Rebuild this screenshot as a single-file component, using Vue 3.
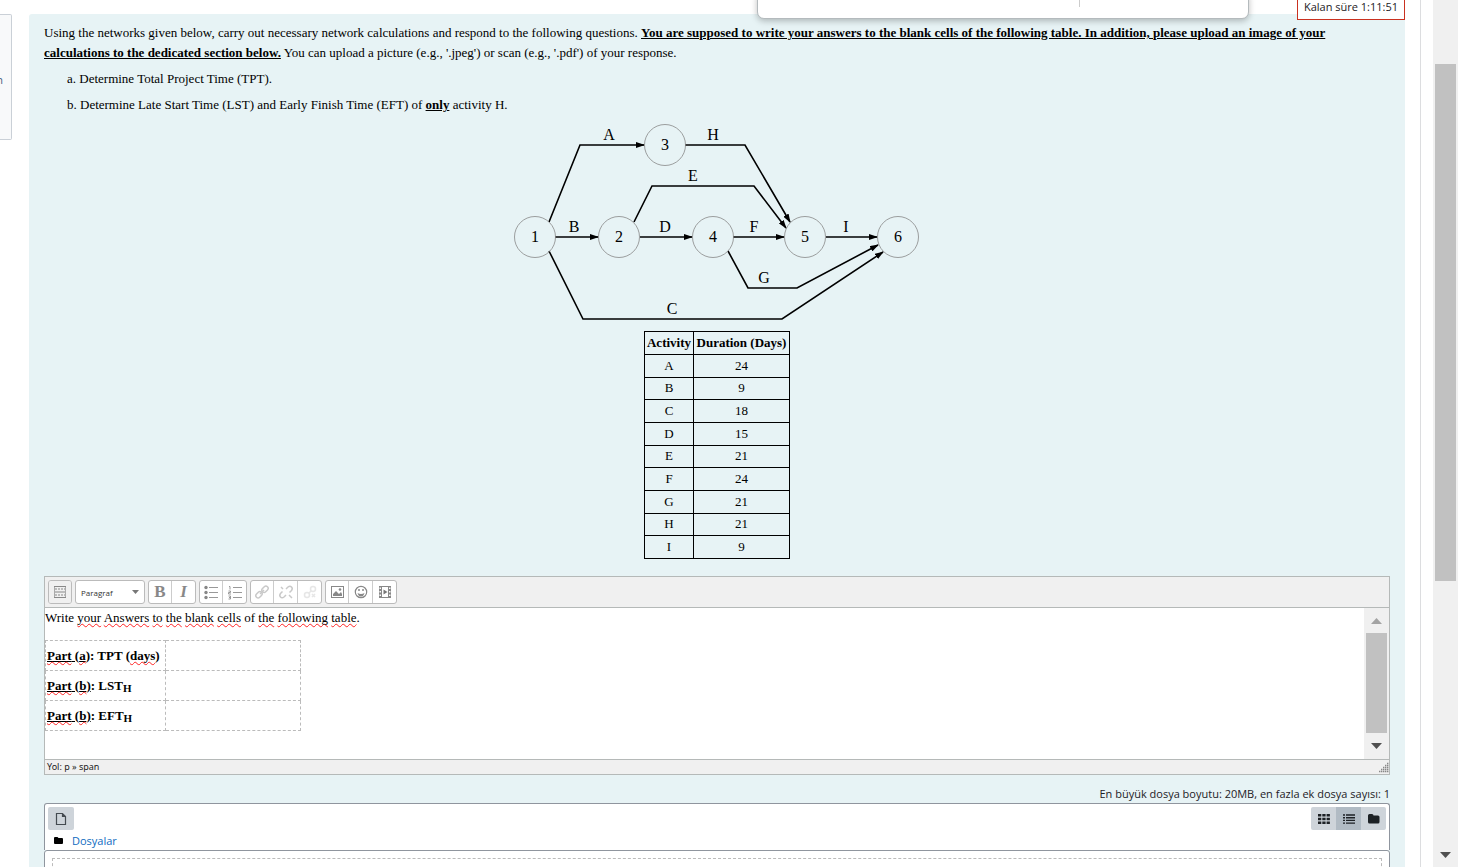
<script setup>
import { ref } from 'vue'

const format = ref('Paragraf')

const nodes = [
  { id: 1, x: 535, y: 237 },
  { id: 2, x: 619, y: 237 },
  { id: 3, x: 665, y: 145 },
  { id: 4, x: 713, y: 237 },
  { id: 5, x: 805, y: 237 },
  { id: 6, x: 898, y: 237 },
]

const edges = [
  { name: 'A', points: '549,222 580,145 644,145', x: 609, y: 140 },
  { name: 'H', points: '685,145 745,145 790,222', x: 713, y: 140 },
  { name: 'E', points: '634,222 652,186 754,186 786,228', x: 693, y: 181 },
  { name: 'B', points: '555,237 598,237', x: 574, y: 232 },
  { name: 'D', points: '640,237 692,237', x: 665, y: 232 },
  { name: 'F', points: '733,237 784,237', x: 754, y: 232 },
  { name: 'I', points: '826,237 877,237', x: 846, y: 232 },
  { name: 'G', points: '728,251 748,288 797,288 878,245', x: 764, y: 283 },
  { name: 'C', points: '549,251 583,319 782,319 883,252', x: 672, y: 314 },
]

const durations = [
  ['A', 24], ['B', 9], ['C', 18], ['D', 15], ['E', 21],
  ['F', 24], ['G', 21], ['H', 21], ['I', 9],
]
</script>

<template>
  <div class="page">
    <aside class="side"><div class="side-box"><span>n</span></div></aside>

    <main class="main">
      <section class="question">
        <p class="intro">
          Using the networks given below, carry out necessary network calculations and respond to the following questions.
          <b><u>You are supposed to write your answers to the blank cells of the following table. In addition, please upload an image of your calculations to the dedicated section below.</u></b>
          You can upload a picture (e.g., '.jpeg') or scan (e.g., '.pdf') of your response.
        </p>
        <ol class="tasks">
          <li>Determine Total Project Time (TPT).</li>
          <li>Determine Late Start Time (LST) and Early Finish Time (EFT) of <b><u>only</u></b> activity H.</li>
        </ol>

        <svg class="network" viewBox="514 124 406 197" width="406" height="197" role="img" aria-label="Activity network">
          <defs>
            <marker id="tip" markerUnits="userSpaceOnUse" markerWidth="9" markerHeight="6" refX="8" refY="3" orient="auto">
              <path d="M0 0 9 3 0 6Z" />
            </marker>
          </defs>
          <g v-for="e in edges" :key="e.name">
            <polyline class="edge" :points="e.points" marker-end="url(#tip)" />
            <text :x="e.x" :y="e.y">{{ e.name }}</text>
          </g>
          <g v-for="n in nodes" :key="n.id">
            <circle class="node" :cx="n.x" :cy="n.y" r="20.5" />
            <text :x="n.x" :y="n.y + 5">{{ n.id }}</text>
          </g>
        </svg>

        <table class="durations">
          <thead><tr><th>Activity</th><th>Duration (Days)</th></tr></thead>
          <tbody>
            <tr v-for="row in durations" :key="row[0]"><td>{{ row[0] }}</td><td>{{ row[1] }}</td></tr>
          </tbody>
        </table>

        <div class="editor">
          <div class="toolbar">
            <div class="group active">
              <button type="button" aria-label="Toggle toolbar">
                <svg viewBox="0 0 16 16"><path d="M2 2.500h12M2 13.500h12M2 8h12" fill="none" stroke="#888" /><path d="M2.500 3v10M13.500 3v10" fill="none" stroke="#aaa" /><path d="M3 5h10M3 11h10" fill="none" stroke="#888" stroke-dasharray="2 1" /></svg>
              </button>
            </div>
            <div class="select-wrap">
              <select v-model="format" aria-label="Biçim"><option>Paragraf</option></select>
              <svg class="caret" viewBox="0 0 7 4"><path d="M0 0h7L3.500 4Z" fill="#777" /></svg>
            </div>
            <div class="group">
              <button type="button" class="letter bold">B</button>
              <button type="button" class="letter italic">I</button>
            </div>
            <div class="group">
              <button type="button" aria-label="Bulleted list">
                <svg viewBox="0 0 16 16"><path d="M6 3.500h9M6 8.500h9M6 13.500h9" fill="none" stroke="#999" stroke-width="1.200" /><g fill="#888"><circle cx="3" cy="3.500" r="1.700" /><circle cx="3" cy="8.500" r="1.700" /><circle cx="3" cy="13.500" r="1.700" /></g></svg>
              </button>
              <button type="button" aria-label="Numbered list">
                <svg viewBox="0 0 16 16"><path d="M6 3.500h9M6 8.500h9M6 13.500h9" fill="none" stroke="#999" stroke-width="1.200" /><path d="M2 2.500h1v3M1.500 7h2v1.500h-2V10h2.500M1.500 12h2v3h-2M2 13.500h1.500" fill="none" stroke="#999" /></svg>
              </button>
            </div>
            <div class="group faded">
              <button type="button" aria-label="Link">
                <svg viewBox="0 0 16 16"><g fill="none" stroke="#888" stroke-width="1.500"><rect x="7.500" y="3" width="7" height="4.500" rx="2.250" transform="rotate(-45 11 5.250)" /><rect x="1.500" y="8.500" width="7" height="4.500" rx="2.250" transform="rotate(-45 5 10.750)" /><path d="m6 10 4-4" /></g></svg>
              </button>
              <button type="button" aria-label="Unlink">
                <svg viewBox="0 0 16 16"><g fill="none" stroke="#888" stroke-width="1.500"><path d="m8 5 2-2q2-1.500 3.500 0t0 3.500l-2 2M8 11l-2 2q-2 1.500-3.500 0t0-3.500l2-2M3 3l2 2M11 11l3 3" /></g></svg>
              </button>
              <button type="button" class="fainter" aria-label="Prevent automatic linking">
                <svg viewBox="0 0 16 16"><g fill="none" stroke="#888" stroke-width="1.500"><circle cx="11" cy="5" r="2.500" /><circle cx="5" cy="11" r="2.500" /><path d="m7 9 2-2M10 10l3 3M10 13l3-3" /></g></svg>
              </button>
            </div>
            <div class="group">
              <button type="button" aria-label="Image">
                <svg viewBox="0 0 16 16"><rect x="2.500" y="2.500" width="12" height="11" fill="none" stroke="#888" /><path d="M4 12V10l3-3 3 3 2-2 1 2v2Z" fill="#888" /><circle cx="11" cy="5.500" r="1.300" fill="#888" /></svg>
              </button>
              <button type="button" aria-label="Emoji">
                <svg viewBox="0 0 16 16"><circle cx="8" cy="8" r="5.700" fill="none" stroke="#888" stroke-width="1.200" /><path d="M4.500 9q3.500 2 7 0-1 3.500-3.500 3.500T4.500 9Z" fill="#888" /><circle cx="6" cy="6" r="1" fill="#888" /><circle cx="10" cy="6" r="1" fill="#888" /></svg>
              </button>
              <button type="button" aria-label="Media">
                <svg viewBox="0 0 16 16"><path d="M2 2h12v12H2Z" fill="#888" /><path d="M5 3h6v10H5ZM2.500 3.500h1.500V5H2.500ZM2.500 7h1.500v1.500H2.500ZM2.500 10.500h1.500V12H2.500ZM12 3.500h1.500V5H12ZM12 7h1.500v1.500H12ZM12 10.500h1.500V12H12Z" fill="#fff" /><path d="m6.500 5.500 4 2.500-4 2.500Z" fill="#777" /></svg>
              </button>
            </div>
          </div>

          <div class="edit-area">
            <div class="content" contenteditable="true" role="textbox" aria-label="Yanıt" spellcheck="false">
              <p>Write <i>your</i> <i>Answers</i> <i>to</i> <i>the</i> <i>blank</i> <i>cells</i> of <i>the</i> <i>following</i> <i>table</i>.</p>
              <table class="answers">
                <tbody>
                  <tr><th><u><i>Part</i> (<i>a</i>)</u>: TPT (<i>days</i>)</th><td></td></tr>
                  <tr><th><u><i>Part</i> (<i>b</i>)</u>: LST<sub>H</sub></th><td></td></tr>
                  <tr><th><u><i>Part</i> (<i>b</i>)</u>: EFT<sub>H</sub></th><td></td></tr>
                </tbody>
              </table>
            </div>
            <div class="scroll">
              <svg class="arrow" viewBox="0 0 11 6"><path d="M5.500 0 11 6H0Z" fill="#a3a3a3" /></svg>
              <div class="thumb"></div>
              <svg class="arrow" viewBox="0 0 11 6"><path d="M0 0h11L5.500 6Z" fill="#505050" /></svg>
            </div>
          </div>

          <div class="status">
            <span>Yol: p » span</span>
            <svg viewBox="0 0 12 12" width="12" height="12"><path d="M10 2.500h2M8 4.500h4M6 6.500h6M4 8.500h8M2 10.500h10" fill="none" stroke="#888" stroke-width="1.400" stroke-dasharray="1.400 .6" /></svg>
          </div>
        </div>

        <p class="limit">En büyük dosya boyutu: 20MB, en fazla ek dosya sayısı: 1</p>

        <div class="files">
          <div class="files-head">
            <div class="files-bar">
              <button type="button" class="add" aria-label="Dosya ekle">
                <svg viewBox="0 0 12 14" width="12" height="14"><path d="M1.500 1.500h6l3 3v8h-9ZM7.500 1.500v3h3" fill="none" stroke="#444a50" stroke-width="1.200" /></svg>
              </button>
              <div class="views">
                <button type="button" aria-label="Simgeler">
                  <svg viewBox="0 0 14 12" width="14" height="12"><path d="M1 1h3.300v2.500H1ZM5.300 1h3.300v2.500H5.300ZM9.600 1h3.300v2.500H9.600ZM1 4.700h3.300v2.500H1ZM5.300 4.700h3.300v2.500H5.300ZM9.600 4.700h3.300v2.500H9.600ZM1 8.400h3.300v2.500H1ZM5.300 8.400h3.300v2.500H5.300ZM9.600 8.400h3.300v2.500H9.600Z" fill="#1d2125" /></svg>
                </button>
                <button type="button" class="on" aria-label="Liste">
                  <svg viewBox="0 0 14 12" width="14" height="12"><path d="M1 2h2M4 2h9M1 4.700h2M4 4.700h9M1 7.400h2M4 7.400h9M1 10.100h2M4 10.100h9" stroke="#1d2125" stroke-width="1.400" /></svg>
                </button>
                <button type="button" aria-label="Klasörler">
                  <svg viewBox="0 0 14 12" width="14" height="12"><path d="M1 2.500Q1 1 2.500 1H5q1.500 0 1.500 1.500h4.500q1.500 0 1.500 1.500v5q0 1.500-1.500 1.500H2.500Q1 10.500 1 9Z" fill="#1d2125" /></svg>
                </button>
              </div>
            </div>
            <div class="crumb">
              <svg viewBox="0 0 10 8" width="10" height="8"><path d="M0 1q0-1 1-1h2.500l1 1H8q1 0 1 1v4q0 1-1 1H1Q0 7 0 6Z" /></svg>
              <a href="#">Dosyalar</a>
            </div>
          </div>
          <div class="files-body"><div class="drop"></div></div>
        </div>
      </section>
      <div class="timer">Kalan süre 1:11:51</div>
    </main>

    <div class="page-scroll">
      <div class="page-thumb"></div>
      <svg class="arrow" viewBox="0 0 11 6"><path d="M0 0h11L5.500 6Z" fill="#505050" /></svg>
    </div>
    <div class="popup"></div>
  </div>
</template>

<style>
body { overflow: hidden; background: #fff; }
</style>

<style scoped>
* { box-sizing: border-box; }
p { margin: 0; }
button { padding: 0; margin: 0; font: inherit; cursor: pointer; }
.page {
  position: relative; display: flex; height: 100vh; overflow: hidden;
  color: #000; font-family: "Liberation Serif", "Times New Roman", serif; font-size: 13px; line-height: 20px;
}
.side { flex: 0 0 29px; padding-top: 14px; }
.side-box {
  display: flex; justify-content: flex-end; align-items: center; width: 12px; height: 126px; padding: 5px 8px 0 0;
  overflow: hidden; border: 1px solid #cad0d7; border-left: 0; border-radius: 0 2px 2px 0; background: #f8f9fa;
  font-family: "Open Sans", "Noto Sans", sans-serif; font-size: 11px; color: #4a6080;
}
.main { position: relative; flex: 1; padding: 14px 15px 0 0; border-right: 1px solid #dcdddf; }
.question { display: flex; flex-direction: column; padding: 9px 15px 0; min-height: 100%; background: #e7f3f5; border-radius: 3px 3px 0 0; }
.tasks { margin: 6px 0 9px; padding-left: 23px; list-style: lower-alpha inside; }
.tasks li + li { margin-top: 6px; }
.network { align-self: center; flex: none; display: block; overflow: visible; }
.network text { font-size: 16px; text-anchor: middle; }
.edge { fill: none; stroke: #000; stroke-width: 1.6; }
.node { fill: none; stroke: #888; stroke-width: 0.8; }
.durations { align-self: center; width: 146px; margin-top: 10px; height: 228px; border-collapse: collapse; text-align: center; line-height: 18px; }
.durations th, .durations td { border: 1px solid #000; padding: 0 1px; }
.durations th { height: 23px; }
.durations th:first-child { width: 49px; }

.editor { margin-top: 17px; border: 1px solid #b5b9b8; background: #f0f0f0; }
.toolbar { display: flex; gap: 3px; height: 31px; padding: 3px; border-bottom: 1px solid #b5b9b8; }
.group { display: flex; height: 24px; border: 1px solid #bbb; border-radius: 3px; background: #fff; overflow: hidden; }
.group button { display: flex; align-items: center; justify-content: center; width: 22px; border: 0; background: none; color: #888; }
.group button + button { border-left: 1px solid #ccc; width: 24px; }
.group svg { width: 16px; height: 16px; }
.group.active { box-shadow: inset 0 0 4px #ccc; }
.group.active button { background: #f0f0f0; }
.faded svg { opacity: 0.45; }
.faded .fainter svg { opacity: 0.2; }
.letter { font-family: "Liberation Serif", serif; font-size: 17px; font-weight: bold; }
.letter.italic { font-style: italic; }
.select-wrap { position: relative; }
.select-wrap select {
  appearance: none; display: block; width: 70px; height: 24px; padding: 0 5px; border: 1px solid #bbb; border-radius: 3px;
  background: #fff; color: #333; font-family: "Open Sans", "Noto Sans", sans-serif; font-size: 8px;
}
.caret { position: absolute; right: 6px; top: 10px; width: 7px; height: 4px; pointer-events: none; }
.edit-area { display: flex; height: 151px; background: #fff; }
.content { flex: 1; outline: none; }
.content i { font-style: normal; text-decoration: underline wavy #f22 1px; text-underline-offset: 1px; text-decoration-skip-ink: none; }
.answers { margin-top: 12px; border-collapse: collapse; line-height: 20px; }
.answers th, .answers td { height: 30px; padding: 0 1px; border: 1px dashed #bbb; text-align: left; }
.answers th { width: 120px; }
.answers td { width: 135px; }
.answers sub { font-size: 11px; line-height: 0; vertical-align: -2px; }
.scroll { display: flex; flex-direction: column; align-items: center; width: 25px; padding: 10px 2px 10px; background: #f0f0f0; }
.arrow { width: 11px; height: 6px; flex: none; }
.thumb { width: 21px; height: 100px; margin: 9px 0 auto; background: #c1c1c1; }
.status {
  display: flex; justify-content: space-between; align-items: center; height: 15px; padding-left: 2px; border-top: 1px solid #b5b9b8;
  font-family: "Noto Sans", "Open Sans", sans-serif; font-size: 9px; line-height: 14px; color: #222;
}
.limit { margin-top: 10px; text-align: right; font-family: "Open Sans", "Noto Sans", sans-serif; font-size: 11px; line-height: 18px; color: #1d2125; }
.files-head { height: 47px; padding: 3px; border: 1px solid #8f959e; border-bottom: 0; border-radius: 3px 3px 0 0; background: #fff; }
.files-bar { display: flex; justify-content: space-between; }
.add, .views button { display: flex; align-items: center; justify-content: center; height: 23px; border: 0; background: #ced4da; }
.add { width: 26px; border-radius: 2px; }
.views { display: flex; border-radius: 2px; overflow: hidden; }
.views button { width: 25px; }
.views button.on { background: #b1bbc4; }
.crumb { display: flex; align-items: center; gap: 8px; padding-left: 6px; font-family: "Open Sans", "Noto Sans", sans-serif; font-size: 11px; line-height: 22px; }
.crumb a { color: #0f6cbf; text-decoration: none; }
.files-body { height: 60px; padding: 7px; border: 1px solid #8f959e; border-radius: 3px; background: #fff; }
.drop { height: 100%; border: 1px dashed #bbb; }

.timer {
  position: absolute; right: 15px; top: 0; height: 20px; padding: 0 6px; border: 1px solid #ca3120; border-top: 0; background: #fff;
  font-family: "Open Sans", "Noto Sans", sans-serif; font-size: 11px; line-height: 14px; color: #1d2125;
}
.page-scroll { display: flex; flex-direction: column; justify-content: space-between; align-items: center; flex: 0 0 25px; margin-left: 12px; padding: 64px 2px 9px; background: #f0f0f0; }
.page-thumb { width: 21px; height: 517px; background: #c1c1c1; }
.popup {
  position: absolute; left: 757px; top: -10px; width: 492px; height: 29px; background: #fff;
  border: 1px solid #b4babd; border-radius: 7px; box-shadow: 0 2px 6px rgba(0, 0, 0, 0.25);
}
.popup::after { content: ""; position: absolute; left: 321px; top: 0; width: 1px; height: 16px; background: #ccc; }
</style>
